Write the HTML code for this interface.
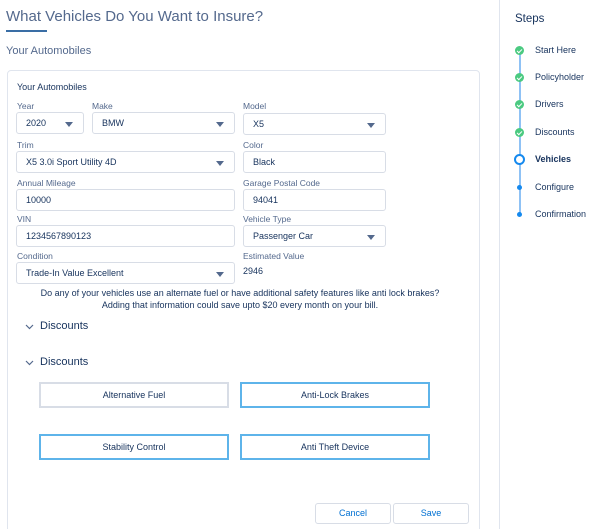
<!DOCTYPE html>
<html><head><style>
*{box-sizing:border-box;margin:0;padding:0}
html,body{width:600px;height:529px;overflow:hidden}
body{background:#fff;font-family:"Liberation Sans",sans-serif;color:#16325c;position:relative}
.a{position:absolute}
.lbl{position:absolute;font-size:8.5px;color:#54698d}
.f{position:absolute;height:22px;border:1px solid #d8dde6;border-radius:3px;font-size:9px;color:#16325c;padding:5px 0 0 9px;background:#fff}
.f.s::after{content:"";position:absolute;right:10px;top:9px;border-left:4px solid transparent;border-right:4px solid transparent;border-top:5px solid #54698d}
.btn{position:absolute;width:190px;height:26px;border:2px solid #d8dde6;font-size:9px;text-align:center;line-height:22px;color:#16325c}
.btn.b{border-color:#5eb4ea}
.step{position:absolute;left:535px;font-size:9px;color:#16325c}
.dot{position:absolute;left:515px;width:9px;height:9px;border-radius:50%;background:#4bca81}
.dot::after{content:"";position:absolute;left:2.5px;top:1.5px;width:2px;height:4px;border:solid #fff;border-width:0 1.2px 1.2px 0;transform:rotate(45deg)}
.sm{position:absolute;left:517px;width:5px;height:5px;border-radius:50%;background:#1589ee}
</style></head><body>
<div class="a" style="left:6px;top:8px;font-size:15px;color:#54698d">What Vehicles Do You Want to Insure?</div>
<div class="a" style="left:6px;top:30px;width:41px;height:2px;background:#3a6ea5"></div>
<div class="a" style="left:6px;top:45px;font-size:11px;color:#54698d">Your Automobiles</div>
<div class="a" style="left:7px;top:70px;width:473px;height:470px;border:1px solid #e0e5ee;border-radius:4px"></div>
<div class="a" style="left:17px;top:82px;font-size:9px;color:#16325c">Your Automobiles</div>
<div class="lbl" style="left:17px;top:101px">Year</div>
<div class="lbl" style="left:92px;top:101px">Make</div>
<div class="lbl" style="left:243px;top:101px">Model</div>
<div class="f s" style="left:16px;top:112px;width:68px">2020</div>
<div class="f s" style="left:92px;top:112px;width:143px">BMW</div>
<div class="f s" style="left:243px;top:113px;width:143px">X5</div>
<div class="lbl" style="left:17px;top:140px">Trim</div>
<div class="lbl" style="left:243px;top:140px">Color</div>
<div class="f s" style="left:16px;top:151px;width:219px">X5 3.0i Sport Utility 4D</div>
<div class="f" style="left:243px;top:151px;width:143px">Black</div>
<div class="lbl" style="left:17px;top:178px">Annual Mileage</div>
<div class="lbl" style="left:243px;top:178px">Garage Postal Code</div>
<div class="f" style="left:16px;top:189px;width:219px">10000</div>
<div class="f" style="left:243px;top:189px;width:143px">94041</div>
<div class="lbl" style="left:17px;top:214px">VIN</div>
<div class="lbl" style="left:243px;top:214px">Vehicle Type</div>
<div class="f" style="left:16px;top:225px;width:219px">1234567890123</div>
<div class="f s" style="left:243px;top:225px;width:143px">Passenger Car</div>
<div class="lbl" style="left:17px;top:251px">Condition</div>
<div class="lbl" style="left:243px;top:251px">Estimated Value</div>
<div class="f s" style="left:16px;top:262px;width:219px">Trade-In Value Excellent</div>
<div class="a" style="left:243px;top:266px;font-size:9px">2946</div>
<div class="a" style="left:0;width:480px;top:287px;font-size:9px;text-align:center;line-height:12px">Do any of your vehicles use an alternate fuel or have additional safety features like anti lock brakes?<br>Adding that information could save upto $20 every month on your bill.</div>
<svg class="a" style="left:25px;top:324px" width="9" height="6"><path d="M1 1L4.5 4.5L8 1" fill="none" stroke="#54698d" stroke-width="1.2"/></svg>
<div class="a" style="left:40px;top:320px;font-size:11px;color:#16325c">Discounts</div>
<svg class="a" style="left:25px;top:360px" width="9" height="6"><path d="M1 1L4.5 4.5L8 1" fill="none" stroke="#54698d" stroke-width="1.2"/></svg>
<div class="a" style="left:40px;top:356px;font-size:11px;color:#16325c">Discounts</div>
<div class="btn" style="left:39px;top:382px">Alternative Fuel</div>
<div class="btn b" style="left:240px;top:382px">Anti-Lock Brakes</div>
<div class="btn b" style="left:39px;top:434px">Stability Control</div>
<div class="btn b" style="left:240px;top:434px">Anti Theft Device</div>
<div class="a" style="left:315px;top:503px;width:76px;height:21px;border:1px solid #d8dde6;border-radius:3px;font-size:9px;color:#0070d2;text-align:center;line-height:19px">Cancel</div>
<div class="a" style="left:393px;top:503px;width:76px;height:21px;border:1px solid #d8dde6;border-radius:3px;font-size:9px;color:#0070d2;text-align:center;line-height:19px">Save</div>
<div class="a" style="left:499px;top:0;width:1px;height:529px;background:#e0e5ee"></div>
<div class="a" style="left:515px;top:13px;font-size:11.5px;color:#16325c">Steps</div>
<div class="a" style="left:519px;top:50px;width:1.5px;height:164px;background:#8fc2f5"></div>
<div class="dot" style="top:46px"></div><div class="step" style="top:45px">Start Here</div>
<div class="dot" style="top:73px"></div><div class="step" style="top:72px">Policyholder</div>
<div class="dot" style="top:100px"></div><div class="step" style="top:99px">Drivers</div>
<div class="dot" style="top:128px"></div><div class="step" style="top:127px">Discounts</div>
<div class="a" style="left:514px;top:154px;width:11px;height:11px;border-radius:50%;border:2.5px solid #1589ee;background:#fff"></div><div class="step" style="top:154px;font-weight:bold">Vehicles</div>
<div class="sm" style="top:185px"></div><div class="step" style="top:182px">Configure</div>
<div class="sm" style="top:212px"></div><div class="step" style="top:209px">Confirmation</div>
</body></html>
